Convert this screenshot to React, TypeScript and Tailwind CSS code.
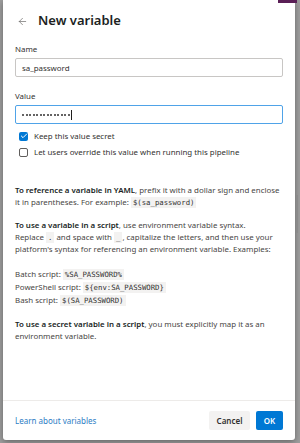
import { ArrowLeft, Check } from "lucide-react";

const Code: React.FC<{ children: React.ReactNode }> = ({ children }) => (
  <code className="bg-[#f3f2f1] px-[2px] py-[1px] font-['DejaVu_Sans_Mono',monospace] text-[7.3px] leading-none text-[#323130]">
    {children}
  </code>
);

const Line: React.FC<{ children: React.ReactNode; h?: string }> = ({ children, h = "h-[12px]" }) => (
  <div className={`flex items-center ${h}`}>
    <span>{children}</span>
  </div>
);

const App: React.FC = () => {
  return (
    <div className="h-[443px] w-[300px] overflow-hidden bg-[#9e9e9e] font-['Noto_Sans',sans-serif]">
      <div className="flex h-[443px] flex-row">
        {/** Dialog */}
        <div className="ml-[3px] flex h-[440px] w-[292px] flex-col rounded-b-[3px] bg-white shadow-[0_2px_6px_rgba(0,0,0,0.35)]">
          {/** Header */}
          <div className="flex h-[43px] items-center pl-[14px] pb-[1px]">
            <ArrowLeft className="h-[11px] w-[11px] text-[#605e5c]" strokeWidth={1.4} />
            <span className="ml-[10px] text-[13px] font-semibold text-[#201f1e]">New variable</span>
          </div>

          {/** Form */}
          <div className="flex flex-col whitespace-nowrap px-[12px] text-[7.9px] leading-[12px] text-[#323130]">
            <label className="h-[12px]">Name</label>
            <div className="mt-[3px] flex h-[19px] items-center rounded-[2px] border border-[#c8c6c4] px-[6px]">
              sa_password
            </div>
            <label className="mt-[13px] h-[12px]">Value</label>
            <div className="mt-[3px] flex h-[19px] items-center rounded-[2px] border-[1.5px] border-[#4fa3e8] px-[6px]">
              <div className="flex items-center gap-[1.5px]">
                {Array.from({ length: 14 }).map((_, i) => (
                  <span key={i} className="h-[2px] w-[2px] rounded-full bg-[#323130]" />
                ))}
              </div>
              <span className="ml-[1px] h-[10px] w-[1px] bg-[#201f1e]" />
            </div>

            <div className="mt-[4px] flex h-[16px] items-center pl-[4px]">
              <span className="flex h-[9px] w-[9px] items-center justify-center rounded-[2px] bg-[#0078d4]">
                <Check className="h-[8px] w-[8px] text-white" strokeWidth={3} />
              </span>
              <span className="ml-[6px]">Keep this value secret</span>
            </div>
            <div className="flex h-[16px] items-center pl-[4px]">
              <span className="h-[9px] w-[9px] rounded-[2px] border border-[#605e5c]" />
              <span className="ml-[6px]">Let users override this value when running this pipeline</span>
            </div>

            {/** Help text */}
            <div className="mt-[24px] text-[#484644]">
              <Line>
                <b className="font-semibold text-[#201f1e]">To reference a variable in YAML</b>, prefix it with a dollar sign and enclose
              </Line>
              <Line>
                it in parentheses. For example: <Code>$(sa_password)</Code>
              </Line>
            </div>

            <div className="mt-[11px] text-[#484644]">
              <Line>
                <b className="font-semibold text-[#201f1e]">To use a variable in a script</b>, use environment variable syntax.
              </Line>
              <Line>
                Replace <Code>.</Code> and space with <Code>_</Code>, capitalize the letters, and then use your
              </Line>
              <Line>platform's syntax for referencing an environment variable. Examples:</Line>
            </div>

            <div className="mt-[12px] text-[#484644]">
              <Line h="h-[13px]">Batch script: <Code>%SA_PASSWORD%</Code></Line>
              <Line h="h-[13px]">PowerShell script: <Code>{"${env:SA_PASSWORD}"}</Code></Line>
              <Line h="h-[13px]">Bash script: <Code>$(SA_PASSWORD)</Code></Line>
            </div>

            <div className="mt-[12px] text-[#484644]">
              <Line>
                <b className="font-semibold text-[#201f1e]">To use a secret variable in a script</b>, you must explicitly map it as an
              </Line>
              <Line>environment variable.</Line>
            </div>
          </div>

          <div className="flex-1" />

          {/** Footer */}
          <div className="flex h-[40px] items-center justify-between border-t border-[#edebe9] pl-[12px] pr-[12px] text-[8px]">
            <a className="text-[#2b7cc4]">Learn about variables</a>
            <div className="flex gap-[6px]">
              <button className="h-[19px] w-[41px] rounded-[2px] bg-[#f3f2f1] font-semibold text-[#323130]">Cancel</button>
              <button className="h-[19px] w-[27px] rounded-[2px] bg-[#0078d4] font-semibold text-white">OK</button>
            </div>
          </div>
        </div>

        {/** Right edge of the page behind the overlay */}
        <div className="flex flex-1 flex-col">
          <div className="mr-[3px] -ml-[17px] h-[3px] bg-[#5a1f56]" />
          <div className="mt-[192px] ml-[1px] h-[38px] w-[2px] bg-[#8a8a8a]" />
        </div>
      </div>
    </div>
  );
};

export default App;
